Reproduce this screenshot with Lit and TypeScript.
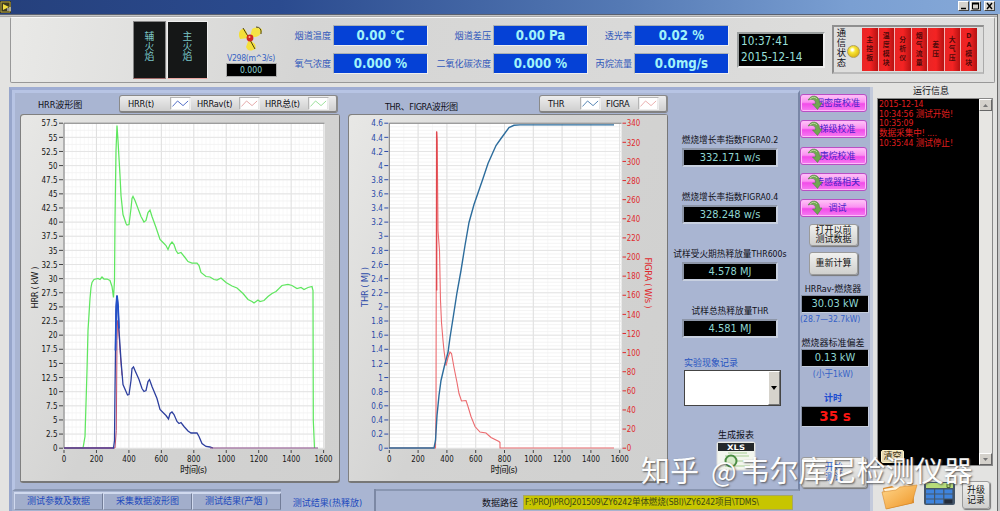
import { LitElement, html, svg, css } from "lit";
import { customElement, property } from "lit/decorators.js";

type Pts = string;

const range = (n: number) => Array.from({ length: n }, (_, i) => i);

const TOTAL: Pts =
  "64,447.5 83,447.5 85,436 87,370 88,330 90,298 91,287 92,282 94,279 98,278 100,279 102,276.5 104,278.5 107,278.5 110,280 112,286 113.5,297 114.5,280 115,220 116,150 117,125 118,140 120,175 121,195 123,214 126,223 127,224.5 129,224 131,208 132,198 133,196 135,200 138,208 141,216 144,221.5 146,220 148,212 150,209.5 152,216 156,227 160,239 164,243 166,245 168,249 170,244 172,241.5 174,244 176,250 178,253 181,252 185,257 188,261 192,262.5 197,262.5 199,265 201,272 206,276 210,276.5 214,279 217,279.5 221,277.5 226,282 232,285.5 237,287.5 243,293 248,299 252,301 254,302.5 258,299.5 260,301 264,300 268,296 272,293 276,291 282,285 288,284 292,285 297,288 301,287 304,289 308,287 312,286 313,290 313.3,420 314.5,447.5";
const HRR: Pts =
  "64,447.5 113.5,447.5 114.5,440 115,390 116,310 117,295 118,305 119,330 121,360 123,384 126,391 127.5,394.5 129,394 131,380 132,368 133.5,366.5 135,370 139,379 142,388 144,391 146,390 148,381 149.5,379 152,386 157,398 160,409 163,412 166,415 168.5,418.5 170,413 172,411.5 174,414 177,421 179,423 181,422 184,426 188,430.5 191,432.5 197,432.5 199,436 202,443 206,446 210,446.5 213,447.5";
const HRRAV: Pts = "64,447.5 115,447.5 116.3,430 117,340 117.6,320 118.5,325 120,350 122,375";
const THR: Pts =
  "389,447.5 434,447.5 435.5,440 437,415 439,395 441,380 445,363 448,352 450,337 453,318 457,292 461,270 465,245 469,222 474,204 483,178 488,163 496,145 501,138 509,127 514,124.8 520,124.4 614,124.4";
const FIGRA: Pts =
  "389,447.5 435.5,447.5 436,410 436.5,131 437.2,140 438,230 439.5,250 440.5,300 441.5,322 443,340 444,350 446,365 448,357 450,351.5 451.5,353 454,367 457,382 459,393 461.5,400.5 466,400 468,406 471,416 475,426 480,431.5 486,432.5 491,437 499,441 500,442 500,447.5 614,447.5";

const TOP = 122.7;
const BOTTOM = 447.7;

@customElement("wave-chart")
export class WaveChart extends LitElement {
  @property() kind: "hrr" | "thr" = "hrr";

  static styles = css`
    :host { display: block; }
    svg { display: block; width: 100%; height: 100%; }
    text { font-family: "DejaVu Sans Condensed", "DejaVu Sans", "Noto Sans CJK SC", sans-serif; font-stretch: condensed; font-size: 8.6px; fill: #161616; }
    .blue { fill: #2a49a8; }
    .red { fill: #e02a2e; }
    .name { font-size: 9.5px; }
  `;

  private label(s: string, x: number, y: number, anchor: string, cls = "") {
    return svg`<text class=${cls} x=${x} y=${y} text-anchor=${anchor} textLength=${s.length * 4.5 - (s.includes(".") ? 2 : 0)} lengthAdjust="spacingAndGlyphs">${s}</text>`;
  }

  render() {
    const hrr = this.kind === "hrr";
    const ox = hrr ? 20 : 348;
    const left = hrr ? 64 : 389.3;
    const right = hrr ? 324.5 : 621.5;
    const sx = hrr ? 32.45 : 28.8;
    const sy = (BOTTOM - TOP) / 23;
    const minorY = hrr ? 46 : 92;
    const minorX = hrr ? 64 : 16;
    return html`<svg viewBox="${ox} 114 320 368">
      <rect x=${left} y=${TOP} width=${right - left} height=${BOTTOM - TOP} fill="#fff"></rect>
      ${range(minorX).map((i) => svg`<line x1=${left + (i * sx * 8) / minorX} x2=${left + (i * sx * 8) / minorX} y1=${TOP} y2=${BOTTOM} stroke="#f5f5f5" stroke-width=".7"></line>`)}
      ${range(minorY).map((i) => svg`<line x1=${left} x2=${right} y1=${TOP + (i * (BOTTOM - TOP)) / minorY} y2=${TOP + (i * (BOTTOM - TOP)) / minorY} stroke="#f1f1f1" stroke-width=".8"></line>`)}
      ${range(9).map((i) => svg`<line x1=${left + i * sx} x2=${left + i * sx} y1=${TOP} y2=${BOTTOM} stroke="#dfdfdf"></line>`)}
      ${range(24).map((i) => svg`<line x1=${left} x2=${right} y1=${TOP + i * sy} y2=${TOP + i * sy} stroke="#e4e4e4"></line>`)}
      <path d="M${left} ${BOTTOM}V${TOP}H${right}" fill="none" stroke="#7c7c7c"></path>
      ${range(24).map((i) => {
        const y = TOP + i * sy;
        const v = hrr ? 57.5 - i * 2.5 : Math.round(46 - i * 2) / 10;
        return svg`<line x1=${left - 5} x2=${left - 1} y1=${y} y2=${y} stroke=${hrr ? "#444" : "#2a49a8"}></line>
          ${this.label(String(v), left - 6.5, y + 3.2, "end", hrr ? "" : "blue")}`;
      })}
      ${range(9).map((i) => svg`<line x1=${left + i * sx} x2=${left + i * sx} y1="449.5" y2="452.5" stroke="#444"></line>${this.label(String(i * 200), left + i * sx, 461.5, "middle")}`)}
      ${hrr
        ? svg`
          <polyline points=${TOTAL} fill="none" stroke="#5fe65f" stroke-width="1.25"></polyline>
          <polyline points=${HRRAV} fill="none" stroke="#c0506e" stroke-width="1"></polyline>
          <polyline points=${HRR} fill="none" stroke="#2d3f9e" stroke-width="1.3"></polyline>
          <path d="M115.5 350L116.3 305L117 295L118 305L119 328" fill="none" stroke="#2350c8" stroke-width="1.8"></path>
          <path d="M64 447.5H113M210 447.5H318" stroke="#8a4a88" stroke-width="1.1"></path>
          <text class="name" transform="translate(37.5 308) rotate(-90)" textLength="42">HRR ( kW )</text>
          <text class="name" x="193.5" y="472.5" text-anchor="middle" textLength="27">时间(s)</text>`
        : svg`
          ${range(18).map((i) => {
            const y = TOP + (i * (BOTTOM - TOP)) / 17;
            return svg`<line x1="622.5" x2="626" y1=${y} y2=${y} stroke="#e02a2e"></line>${this.label(String(340 - i * 20), 626.7, y + 3.2, "start", "red")}`;
          })}
          <polyline points=${FIGRA} fill="none" stroke="#ec6a6e" stroke-width="1.1"></polyline>
          <path d="M436.7 131V290" stroke="#e0464c" stroke-width="1.3"></path>
          <polyline points=${THR} fill="none" stroke="#2c6c9c" stroke-width="1.4"></polyline>
          <text class="name blue" transform="translate(367.5 306.5) rotate(-90)" textLength="40">THR ( MJ )</text>
          <text class="name red" transform="translate(645 257) rotate(90)" textLength="51">FIGRA ( W/s )</text>
          <text class="name" x="504" y="472.5" text-anchor="middle" textLength="27">时间(s)</text>`}
    </svg>`;
  }
}

@customElement("app-root")
export class AppRoot extends LitElement {
  static styles = css`
    :host { display: block; width: 1000px; height: 511px; overflow: hidden; position: relative; background: #e3e3e1;
      font-family: "DejaVu Sans Condensed", "DejaVu Sans", "Noto Sans CJK SC", sans-serif; font-stretch: condensed; font-size: 9px; line-height: 12px; color: #101018; white-space: nowrap; }
    * { box-sizing: border-box; }
    svg { display: block; flex: none; }
    .title { height: 14px; display: flex; justify-content: flex-end; gap: 1px; padding: 1px 5px 0 0; background: linear-gradient(90deg, #25407c 0, #2b4b8f 28%, #5479b4 62%, #7a9fd2 85%, #86a9d8 100%); }
    .appicon { margin: 0 auto 0 0; }
    .wb { width: 11px; height: 10px; background: #d6d3ce; border: 1px solid; border-color: #fff #444 #444 #fff; }
    .wb:last-child { margin-left: 2px; }
    .rule { height: 3px; background: linear-gradient(#5a6170 0 1px, #c4c4c4 1px 2px, #a6a6a6 2px); }
    .top { margin: 0 5px 0 10px; height: 66px; border: 1px solid #989898; border-top-color: #f8f8f8; border-radius: 2px; background: linear-gradient(100deg, #e9e9e7, #d5d5d4 30%, #dadad9 70%, #e0e0df); display: flex; padding-top: 3px; }
    .top > * { flex: none; }
    .flame { height: 58px; background: #151717; border: 1px solid #858585; border-bottom-color: #a26a68; display: flex; flex-direction: column; align-items: center; padding-top: 10px; font-size: 9.8px; line-height: 10px; color: #7bc6c8; }
    .f1 { margin-left: 122px; width: 33px; }
    .f2 { margin-left: 1px; width: 41px; border-color: #eee; border-bottom-color: #e9a5a0; }
    .fan { width: 52px; margin-left: 17px; padding-top: 5px; display: flex; flex-direction: column; align-items: center; color: #3562c4; font-size: 8.6px; }
    .fan .pic { margin: 0 2px 0 0; }
    .fan .unit { height: 11px; line-height: 12px; letter-spacing: -.35px; }
    .black { background: #000; color: #8fd6d2; border: 1px solid #8a8f96; text-align: center; }
    .fan .black { width: 51px; height: 14px; line-height: 12px; border: 1px solid #aaa; }
    .fields { margin: 4px 0 0 18px; display: grid; grid-template-columns: 38px 98px 62px 98px 43px 96px; grid-template-rows: 21px 21px; row-gap: 7px; align-items: center; }
    .fl { color: #2f58bb; padding-right: 2px; font-size: 9.1px; display: flex; justify-content: flex-end; }
    .fv { width: 95px; height: 21px; background: #0541d6; border: 1px solid #aab0b4; border-right-color: #eee; border-bottom-color: #eee; color: #a2f3fa; font: bold 13.2px/19px "DejaVu Sans Condensed", "Noto Sans CJK SC", sans-serif; font-stretch: condensed; text-align: center; }
    .clock { margin: 11px 0 0 7px; width: 88px; height: 36px; border: 2px solid #9b9f9f; border-right-color: #eee; border-bottom-color: #eee; background: #000; color: #9be0dc; font-size: 11.6px; line-height: 15.6px; padding: 0 0 0 2px; letter-spacing: .1px; }
    .comm { margin: 4px 0 0 7px; width: 152px; height: 49px; border: 2px solid #8f8f8f; border-right: 1px solid #aaa; border-bottom-color: #bbb; background: #dededd; display: flex; padding-left: 3px; }
    .vert { width: 9px; display: flex; flex-direction: column; align-items: center; font-size: 9.3px; line-height: 10px; padding-top: 1px; }
    .led { width: 13px; height: 13px; border-radius: 50%; background: radial-gradient(circle at 40% 35%, #fff 0 8%, #f8e636 30%, #d8ac09 85%); border: 1px solid #b2a05c; margin: 18px 2px 0 1px; }
    .mods { display: flex; gap: 1px; background: #f3b5b5; height: 43px; margin-top: 1px; }
    .mod { width: 15.5px; background: linear-gradient(90deg, #e92525, #f42323 50%, #b61212); display: flex; flex-direction: column; align-items: center; justify-content: center; font-size: 6.8px; line-height: 9px; color: #4f0a0a; font-weight: 700; }
    .body { display: flex; margin-top: 4px; height: 424px; }
    .tabs-area { margin-left: 9px; width: 791px; flex: none; background: #a7b3d0; border-left: 3px solid #97a6cb; border-top: 3px solid #9fadd3; display: flex; flex-direction: column; }
    .page { height: 401px; border: 3px solid #b7c4e4; border-bottom: 2px solid #8996b1; border-right: 2px solid #7886a6; display: flex; padding: 2px 0 0 5px; background: #a9b5d2; }
    .wave { width: 320px; flex: none; margin-right: 8px; }
    .head { display: flex; justify-content: space-between; height: 19px; padding: 0 2px 0 18px; }
    .head.r { padding: 0 0 0 37px; }
    .cap { padding-top: 4px; font-size: 9.1px; letter-spacing: -.1px; }
    .r .cap { padding-top: 6px; letter-spacing: -.4px; }
    .legend { height: 18px; border: 1px solid #8a8a8a; border-bottom: 2px solid #828282; border-right-width: 2px; border-radius: 3px; background: linear-gradient(#ededed, #cfcfcf); display: flex; align-items: center; font-size: 9.2px; letter-spacing: -.25px; }
    .l1 { width: 219px; padding-left: 8px; }
    .l2 { width: 129px; padding-left: 8px; }
    .lg { display: flex; flex: none; align-items: center; justify-content: space-between; }
    .sw { border: 1px solid #b5b5b5; border-right-color: #eee; border-bottom-color: #eee; }
    wave-chart { width: 320px; height: 369px; border-radius: 3px; background: linear-gradient(115deg, #e8e8e6, #d3d3d2 45%, #d0d0cf); box-shadow: inset 1px 1px 0 #808080, inset -1px -2px 0 #777; }
    .reads { width: 126px; flex: none; display: flex; flex-direction: column; margin-left: -9px; padding-top: 39px; }
    .read { height: 57px; display: flex; flex-direction: column; align-items: center; }
    .read .cap2 { height: 14px; font-size: 8.7px; }
    .read .black { width: 96px; height: 19px; line-height: 16px; font-size: 11px; border: 2px solid #8d96a8; border-right-color: #c8d0e0; border-bottom-color: #c8d0e0; }
    .phen { color: #2552c0; font-size: 9px; margin: -5px 0 1px 17px; }
    .combo { margin-left: 17px; width: 97px; height: 36px; border: 1px solid #444; background: #fff; display: flex; justify-content: flex-end; }
    .drop { width: 12px; background: #d6d3cc; border: 1px solid; border-color: #fff #777 #777 #fff; display: flex; align-items: center; justify-content: center; }
    .rep { display: flex; flex-direction: column; align-items: center; width: 120px; margin: 23px 0 0 9px; font-size: 9px; }
    .strip { display: flex; height: 20px; }
    .strip > * { flex: none; }
    .tab { height: 18px; margin-top: 1px; border: solid; border-width: 2px 2px 1px 1px; border-color: #d0d9ee #727d98 #8994ae #d0d9ee; background: #a2aecb; color: #2049bd; font-size: 9px; line-height: 15px; text-align: center; width: 90px; margin-left: -1px; }
    .tab.first { margin-left: 2px; }
    .tab.on { width: 95px; border: 0; border-right: 2px solid #7c88a4; margin-top: -2px; height: 22px; line-height: 28px; background: #a9b5d2; }
    .pathl { width: 147px; text-align: right; padding: 6px 5px 0 0; font-size: 9px; line-height: 12px; }
    .path { margin-top: 4px; width: 270px; height: 15px; background: #c7c500; color: #3c4814; border: 1px solid #a5a666; font-size: 8.6px; line-height: 13px; padding-left: 1px; letter-spacing: -.13px; }
    .side { width: 73px; flex: none; background: #a9b4d0; border-right: 3px solid #c3cadb; padding-top: 7px; display: flex; flex-direction: column; align-items: flex-start; }
    .side > * { flex: none; }
    .pink { width: 67px; height: 18px; margin-bottom: 8.3px; border: 1px solid #b94fc4; border-radius: 3px; background: linear-gradient(#ffc5f6, #fb8ff2 45%, #f24be9 55%, #f77df2); box-shadow: inset 0 0 0 1px #ffb9fa; color: #4a1fc9; font-size: 9px; line-height: 16px; padding-left: 8px; text-align: center; position: relative; }
    .arrow { position: absolute; left: 6px; top: 0; }
    .btn { border: 1px solid #9b9b9b; border-radius: 3px; background: linear-gradient(#f1f1ef, #d0d0ce); box-shadow: 1px 1px 1px #777; font-size: 9px; line-height: 9.6px; text-align: center; color: #111; display: flex; flex-direction: column; justify-content: center; }
    .b1 { width: 49px; height: 22px; margin: -1px 0 0 9px; }
    .b2 { width: 49px; height: 23px; margin: 6px 0 8px 9px; }
    .w { width: 66px; text-align: center; }
    .side .black { width: 68px; height: 18px; font-size: 11px; line-height: 16px; margin-left: 1px; border-color: #8690a4 #c5cddd #c5cddd #8690a4; }
    .hint { color: #3561c6; font-size: 8.6px; }
    .dev { margin-top: 12px; }
    .two { margin-top: 1px; }
    .timer { color: #1b4bd0; font-weight: 700; font-size: 9px; margin-top: 12px; }
    .side .secs { height: 21px; color: #fa1512; font: bold 13.5px/19px "DejaVu Sans", sans-serif; margin-top: 2px; }
    .start { width: 66px; height: 31px; margin: 30px 0 0 1px; color: #2c58c4; }
    .right { width: 125px; flex: none; padding-left: 4px; display: flex; flex-direction: column; }
    .rt { text-align: center; width: 108px; height: 11px; line-height: 8px; font-size: 9px; }
    .log { width: 116px; height: 368px; display: flex; border: 1px solid #888; background: #000; color: #e01e1e; position: relative; }
    .lines { flex: 1; padding: 1px 0 0 1px; font-size: 8.6px; line-height: 9.7px; letter-spacing: -.05px; }
    .sb { width: 13px; background: #e7e6e3; display: flex; flex-direction: column; justify-content: space-between; }
    .sbb { height: 12px; background: #d4d1cb; border: 1px solid; border-color: #fff #666 #666 #fff; display: flex; align-items: center; justify-content: center; }
    .clear { position: absolute; left: 3px; top: 351px; width: 23px; height: 13px; background: #e5d8b4; border: 1px solid #fff3c8; border-radius: 2px; color: #3a2d10; font-size: 9px; line-height: 11px; text-align: center; }
    .tools { display: flex; align-items: flex-start; gap: 2px; padding: 15px 0 0 3px; }
    .tools .btn { width: 28px; height: 28px; margin-left: 3px; line-height: 10px; }
    .edge { width: 3px; border-left: 1px solid #696969; background: #c7c7c7; position: absolute; right: 0; top: 14px; bottom: 0; }
    .mark { position: absolute; left: 641px; top: 450px; color: #fff; font: 29px/38px "Noto Sans CJK SC", sans-serif; text-shadow: 1px 1px 2px #555; display: flex; opacity: .96; }
    .mark span + span { margin-left: 12px; }
    .at { font-size: 27px; letter-spacing: 4px; }
  `;

  private wave(color: string) {
    return html`<svg class="sw" width="21" height="13" viewBox="0 0 21 13"><rect width="21" height="13" fill="#fff"></rect><path d="M1 10L7 3.5L13.5 9L19.5 3.5" fill="none" stroke=${color} stroke-width="1.1"></path></svg>`;
  }

  private legend(name: string, color: string, w: number, gap = 5) {
    return html`<div class="lg" style="width:${w}px;margin-right:${gap}px"><span>${name}</span>${this.wave(color)}</div>`;
  }

  private pink(name: string) {
    return html`<div class="pink">${name}<svg class="arrow" width="16" height="16" viewBox="0 0 16 16"><path d="M1 5Q5-1 10 2Q13 4 12.5 8H15L10.5 14.5L5.5 9H8.5Q9 5 6 4.5Q3.5 4 1 5Z" fill="#71a850" stroke="#4f8745" stroke-width=".6"></path><path d="M3 4Q7 .5 10 4" fill="none" stroke="#bcd79f"></path></svg></div>`;
  }

  private read(cap: string, v: string) {
    return html`<div class="read"><div class="cap2">${cap}</div><div class="black">${v}</div></div>`;
  }

  private field(label: string, v: string) {
    return html`<div class="fl">${label}</div><div class="fv">${v}</div>`;
  }

  private column(s: string, cls: string) {
    return html`<div class=${cls}>${[...s].map((c) => html`<span>${c}</span>`)}</div>`;
  }

  render() {
    return html`
      <div class="title">
        <svg class="appicon" width="11" height="12" viewBox="0 0 11 12"><rect width="11" height="12" fill="#3d3a20"></rect><path d="M1 1H10V11H1Z" fill="none" stroke="#b5a33c"></path><path d="M3 3L9 6L3 9Z" fill="#f2de42"></path><path d="M8 7V10M10 6V10" stroke="#eee"></path></svg>
        <div class="wb"><svg width="9" height="8"><path d="M2 6.5H7" stroke="#000" stroke-width="1.5"></path></svg></div>
        <div class="wb"><svg width="9" height="8"><path d="M1 1.5H8" stroke="#000" stroke-width="2"></path><path d="M1.5 1V7H7.5V1" fill="none" stroke="#000"></path></svg></div>
        <div class="wb"><svg width="9" height="8"><path d="M2 1L7 7M7 1L2 7" stroke="#000" stroke-width="1.4"></path></svg></div>
      </div>
      <div class="rule"></div>
      <div class="top">
        ${this.column("辅火焰", "flame f1")}
        ${this.column("主火焰", "flame f2")}
        <div class="fan">
          <svg class="pic" width="28" height="26" viewBox="0 0 28 26"><path d="M13 12L4 13Q1 6 6 3Q9 2 10 5Z" fill="#f3df38"></path><path d="M14 11L16 3Q20 0 26 3Q26 9 20 11Z" fill="#f5e445"></path><path d="M13 13L10 21Q12 26 17 24Q21 23 19 18Z" fill="#f4e03c"></path><path d="M7 2L13 12M20 1Q26 1 25 8M14 14L19 23" stroke="#4a3f12" stroke-width="1" fill="none"></path><circle cx="14" cy="12" r="3.4" fill="#d22822"></circle><circle cx="13.5" cy="11" r="1" fill="#ffb097"></circle></svg>
          <div class="unit">V298(m^3/s)</div>
          <div class="black">0.000</div>
        </div>
        <div class="fields">
          ${this.field("烟道温度", "0.00 ℃")}${this.field("烟道差压", "0.00 Pa")}${this.field("透光率", "0.02 %")}
          ${this.field("氧气浓度", "0.000 %")}${this.field("二氧化碳浓度", "0.000 %")}${this.field("丙烷流量", "0.0mg/s")}
        </div>
        <div class="clock">10:37:41<br />2015-12-14</div>
        <div class="comm">
          ${this.column("通信状态", "vert")}
          <div class="led"></div>
          <div class="mods">${["主控板", "温度模块", "分析仪", "烟气流量", "差压", "大气压", "DA模块"].map((m) => this.column(m, "mod"))}</div>
        </div>
      </div>
      <div class="body">
        <div class="tabs-area">
          <div class="page">
            <div class="wave">
              <div class="head"><div class="cap">HRR波形图</div>
                <div class="legend l1">${this.legend("HRR(t)", "#4966c4", 63, 6)}${this.legend("HRRav(t)", "#e3a5a5", 63)}${this.legend("HRR总(t)", "#97df97", 64, 0)}</div></div>
              <wave-chart kind="hrr"></wave-chart>
            </div>
            <div class="wave">
              <div class="head r"><div class="cap">THR、FIGRA波形图</div>
                <div class="legend l2">${this.legend("THR", "#4d7fb0", 53)}${this.legend("FIGRA", "#e9abab", 53, 0)}</div></div>
              <wave-chart kind="thr"></wave-chart>
            </div>
            <div class="reads">
              ${this.read("燃烧增长率指数FIGRA0.2", "332.171 w/s")}
              ${this.read("燃烧增长率指数FIGRA0.4", "328.248 w/s")}
              ${this.read("试样受火期热释放量THR600s", "4.578 MJ")}
              ${this.read("试样总热释放量THR", "4.581 MJ")}
              <div class="phen">实验现象记录</div>
              <div class="combo"><div class="drop"><svg width="6" height="4"><path d="M0 0H6L3 4Z"></path></svg></div></div>
              <div class="rep"><span>生成报表</span>
                <svg width="40" height="30" viewBox="0 0 40 30"><rect x="1" y="1" width="38" height="28" rx="2" fill="#f3f6ee" stroke="#ddd"></rect><rect x="2" y="2" width="36" height="8" fill="#24282a"></rect><text x="20" y="8.6" text-anchor="middle" textLength="18" font-size="7.5" font-weight="700" fill="#fff" lengthAdjust="spacingAndGlyphs">XLS</text><path d="M12 12H31M9 15H33M9 20H34M9 25H34" stroke="#a8cf94"></path><circle cx="15" cy="20" r="5.5" fill="#d8eccb" stroke="#4a8d42" stroke-width="2"></circle></svg>
              </div>
            </div>
          </div>
          <div class="strip">
            <div class="tab first">测试参数及数据</div><div class="tab">采集数据波形图</div><div class="tab">测试结果(产烟 )</div><div class="tab on">测试结果(热释放)</div>
            <div class="pathl">数据路径</div>
            <div class="path">F:\\PROJ\\PROJ201509\\ZY6242单体燃烧(SBI)\\ZY6242项目\\TDMS\\</div>
          </div>
        </div>
        <div class="side">
          ${["烟密度校准", "梯级校准", "庚烷校准", "传感器相关", "调试"].map((p) => this.pink(p))}
          <div class="btn b1"><span>打开以前</span><span>测试数据</span></div>
          <div class="btn b2">重新计算</div>
          <div class="w">HRRav-燃烧器</div>
          <div class="black">30.03 kW</div>
          <div class="hint">(28.7—32.7kW)</div>
          <div class="w dev">燃烧器标准偏差</div>
          <div class="black">0.13 kW</div>
          <div class="hint w two">(小于1kW)</div>
          <div class="timer w">计时</div>
          <div class="black secs">35 s</div>
          <div class="btn start"><span>开始</span><span>测试</span></div>
        </div>
        <div class="right">
          <div class="rt">运行信息</div>
          <div class="log">
            <div class="lines">2015-12-14<br />10:34:56 测试开始!<br />10:35:09<br />数据采集中! ....<br />10:35:44 测试停止!</div>
            <div class="sb"><div class="sbb"><svg width="5" height="3"><path d="M0 3L2.5 0L5 3Z" fill="#777"></path></svg></div><div class="sbb"><svg width="5" height="3"><path d="M0 0L2.5 3L5 0Z" fill="#777"></path></svg></div></div>
            <div class="clear">清空</div>
          </div>
          <div class="tools">
            <svg width="40" height="29" viewBox="0 0 40 29"><defs><linearGradient id="f" x2="1" y2="1"><stop stop-color="#ffd78c"></stop><stop offset="1" stop-color="#ee9424"></stop></linearGradient></defs><path d="M3 7L12 5L15 7L33 2L34 22L7 28Z" fill="#d9892a"></path><path d="M4 8L34 3L33 18L8 25Z" fill="#fff4da"></path><path d="M2 11L16 9L20 6L37 4L32 22L6 28Z" fill="url(#f)" stroke="#d78a2c" stroke-width=".6"></path></svg>
            <svg width="35" height="28" viewBox="0 0 35 28"><rect x="2" y="1" width="31" height="23" rx="2" fill="#445669"></rect><rect x="4" y="2" width="27" height="5" fill="#b7dc7a"></rect><path d="M25 2.5h3v4h-3z" fill="none" stroke="#4d6930"></path>${[0, 1, 2].map((r) => [0, 1, 2].map((c) => svg`<rect x=${4 + c * 9.2} y=${8.5 + r * 5} width="8" height="4" fill=${c === 2 && r === 2 ? "#222c3a" : "#3f84dd"}></rect>`))}</svg>
            <div class="btn"><span>升级</span><span>记录</span></div>
          </div>
        </div>
      </div>
      <div class="edge"></div>
      <div class="mark"><span>知乎</span><span><span class="at">@</span>韦尔库尼检测仪器</span></div>
    `;
  }
}
